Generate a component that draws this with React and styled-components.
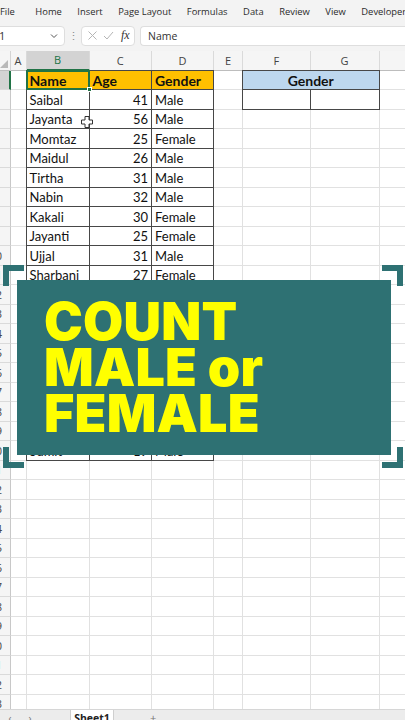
import React from "react";
import styled, { createGlobalStyle } from "styled-components";

const Global = createGlobalStyle`
  html, body { margin: 0; padding: 0; background: #fff; }
  * { box-sizing: border-box; }
`;

const App_ = styled.div`
  position: relative;
  width: 405px;
  height: 720px;
  overflow: hidden;
  display: flex;
  flex-direction: column;
  background: #fff;
  font-family: "Lato", "Liberation Sans", sans-serif;
`;

const MenuBar = styled.div`
  height: 23px;
  flex: none;
  display: flex;
  align-items: center;
  gap: 15.5px;
  padding-left: 0;
  background: #f3f3f3;
  font-family: "Open Sans", "Noto Sans", sans-serif;
  font-size: 9.4px;
  color: #2b2b2b;
  white-space: nowrap;
`;

const MenuItem = styled.span`
  margin-right: ${(p) => (p.$extra ? "5px" : "0")};
`;

const FormulaBar = styled.div`
  height: 28px;
  flex: none;
  display: flex;
  align-items: center;
  background: #f3f3f3;
  padding-bottom: 3px;
  font-family: "Open Sans", "Noto Sans", sans-serif;
  color: #333;
`;

const NameBox = styled.div`
  margin-left: -12px;
  width: 77px;
  height: 20px;
  background: #fff;
  border: 1px solid #dedede;
  border-radius: 4px;
  display: flex;
  align-items: center;
  justify-content: space-between;
  padding: 0 6px 0 3px;
  font-size: 11px;
`;

const Dots = styled.span`
  width: 16px;
  text-align: center;
  color: #8a8a8a;
  font-size: 11px;
`;

const FxBox = styled.div`
  width: 54px;
  height: 20px;
  background: #fff;
  border: 1px solid #dedede;
  border-radius: 4px;
  display: flex;
  align-items: center;
  gap: 5px;
  padding-left: 5px;
`;

const FxText = styled.span`
  font-family: "Liberation Serif", serif;
  font-style: italic;
  font-size: 12px;
  color: #333;
  margin-left: 2px;
`;

const FormulaInput = styled.div`
  flex: 1;
  margin-left: 5px;
  height: 20px;
  background: #fff;
  border: 1px solid #dedede;
  border-right: none;
  border-radius: 4px 0 0 4px;
  display: flex;
  align-items: center;
  padding-left: 7px;
  font-size: 10.5px;
  color: #333;
`;

const Sheet = styled.div`
  flex: 1;
  overflow: hidden;
  background: #fff;
`;

const Grid = styled.div`
  margin-left: -18px;
  display: grid;
  grid-template-columns: 28.5px 16px 63px 62.5px 62px 29px 67.5px 69px 80px;
  grid-template-rows: 19.5px;
  grid-auto-rows: 19.5px;
`;

const Corner = styled.div`
  background: #f5f5f5;
  border-right: 1px solid #d4d4d4;
  border-bottom: 1px solid #bdbdbd;
  display: flex;
  align-items: flex-end;
  justify-content: flex-end;
  padding: 0 2px 2px 0;
`;

const ColHead = styled.div`
  background: ${(p) => (p.$active ? "#d3d3d3" : "#f5f5f5")};
  border-right: 1px solid #dadada;
  border-bottom: ${(p) => (p.$active ? "2px solid #217346" : "1px solid #bdbdbd")};
  display: flex;
  align-items: center;
  justify-content: center;
  font-family: "Open Sans", "Noto Sans", sans-serif;
  font-size: 11px;
  color: ${(p) => (p.$active ? "#217346" : "#444")};
`;

const RowHead = styled.div`
  background: ${(p) => (p.$active ? "#d3d3d3" : "#f5f5f5")};
  border-right: ${(p) => (p.$active ? "2px solid #217346" : "1px solid #c8c8c8")};
  border-bottom: 1px solid #dadada;
  display: flex;
  align-items: center;
  justify-content: center;
  font-family: "Open Sans", "Noto Sans", sans-serif;
  font-size: 11px;
  color: #444;
`;

const Cell = styled.div`
  position: relative;
  border-right: 1px solid #e1e1e1;
  border-bottom: 1px solid #e1e1e1;
  background: ${(p) => p.$bg || "#fff"};
  grid-column: ${(p) => (p.$span ? `span ${p.$span}` : "auto")};
  display: flex;
  align-items: center;
  justify-content: ${(p) =>
    p.$align === "right" ? "flex-end" : p.$align === "center" ? "center" : "flex-start"};
  padding: 1px 3px 0 3px;
  font-size: ${(p) => (p.$bold ? "14px" : "13px")};
  font-weight: ${(p) => (p.$bold ? 700 : 400)};
  color: #111;
  white-space: nowrap;
  overflow: visible;

  ${(p) =>
    p.$dark &&
    `
    &::after {
      content: "";
      position: absolute;
      top: -1px; left: -1px; right: -1px; bottom: -1px;
      border: 1px solid #474747;
      pointer-events: none;
      z-index: 1;
    }
  `}

  ${(p) =>
    p.$selected &&
    `
    &::before {
      content: "";
      position: absolute;
      top: -1px; left: -1px; right: -1px; bottom: -1px;
      border: 2px solid #217346;
      pointer-events: none;
      z-index: 2;
    }
  `}
`;

const FillHandle = styled.span`
  position: absolute;
  right: -3px;
  bottom: -3px;
  width: 5px;
  height: 5px;
  background: #217346;
  border: 1px solid #fff;
  z-index: 3;
`;

const CursorIcon = styled.svg`
  position: absolute;
  right: -4px;
  top: 6px;
  z-index: 3;
`;

const TabBar = styled.div`
  height: 11px;
  flex: none;
  display: flex;
  align-items: flex-start;
  background: #ececec;
  border-top: 1px solid #d6d6d6;
  overflow: hidden;
  font-family: "Open Sans", "Noto Sans", sans-serif;
  font-size: 10px;
  color: #777;
`;

const Arrow = styled.span`
  width: ${(p) => p.$w}px;
  padding-top: 1px;
  text-align: center;
`;

const Tab = styled.div`
  margin-left: 30px;
  width: 44px;
  height: 20px;
  background: #fff;
  border-left: 1px solid #cfcfcf;
  border-right: 1px solid #cfcfcf;
  text-align: center;
  font-weight: 700;
  font-size: 10.5px;
  color: #222;
  padding-top: 1px;
`;

const Plus = styled.span`
  margin-left: 36px;
  padding-top: 0;
  font-size: 11px;
`;

const Overlay = styled.div`
  position: absolute;
  left: 17px;
  top: 280px;
  width: 374px;
  height: 175px;
  background: #2e7173;
  padding: 19px 0 0 27px;
  z-index: 10;
`;

const Title = styled.div`
  font-family: "Inter", "Lato", sans-serif;
  font-weight: 900;
  font-size: 52px;
  line-height: 46px;
  letter-spacing: 0.2px;
  color: #ffff00;
  white-space: nowrap;
`;

const Bracket = styled.div`
  position: absolute;
  width: 21px;
  height: 21px;
  z-index: 11;
  border-color: #2e7173;
  border-style: solid;
  border-width: 0;
  ${(p) => (p.$top ? "top: 265px; border-top-width: 6px;" : "top: 447px; border-bottom-width: 6px;")}
  ${(p) => (p.$left ? "left: 3px; border-left-width: 6px;" : "left: 382px; border-right-width: 6px;")}
`;

const menu = ["File", "Home", "Insert", "Page Layout", "Formulas", "Data", "Review", "View", "Developer"];
const cols = ["", "A", "B", "C", "D", "E", "F", "G", ""];

const table = [
  ["Name", "Age", "Gender"],
  ["Saibal", 41, "Male"],
  ["Jayanta", 56, "Male"],
  ["Momtaz", 25, "Female"],
  ["Maidul", 26, "Male"],
  ["Tirtha", 31, "Male"],
  ["Nabin", 32, "Male"],
  ["Kakali", 30, "Female"],
  ["Jayanti", 25, "Female"],
  ["Ujjal", 31, "Male"],
  ["Sharbani", 27, "Female"],
  ["Rakesh", 28, "Male"],
  ["Priya", 24, "Female"],
  ["Amit", 35, "Male"],
  ["Sunita", 29, "Female"],
  ["Rahul", 33, "Male"],
  ["Puja", 22, "Female"],
  ["Arjun", 27, "Male"],
  ["Rina", 26, "Female"],
  ["Sumit", 19, "Male"],
];

const ORANGE = "#ffc000";
const BLUE = "#bdd7ee";

function Row({ r }) {
  const t = table[r - 1];
  const head = r === 1;
  return (
    <>
      <RowHead $active={head}>{r}</RowHead>
      <Cell />
      {t ? (
        <>
          <Cell $dark $bold={head} $bg={head ? ORANGE : undefined} $selected={head}>
            {t[0]}
            {head && <FillHandle />}
            {r === 3 && (
              <CursorIcon width="12" height="12" viewBox="0 0 12 12">
                <path
                  d="M4 0.5h4v3.5h3.5v4H8v3.5H4V8H0.5V4H4z"
                  fill="#fff"
                  stroke="#333"
                  strokeWidth="1"
                />
              </CursorIcon>
            )}
          </Cell>
          <Cell $dark $bold={head} $bg={head ? ORANGE : undefined} $align={head ? "left" : "right"}>
            {t[1]}
          </Cell>
          <Cell $dark $bold={head} $bg={head ? ORANGE : undefined}>
            {t[2]}
          </Cell>
        </>
      ) : (
        <>
          <Cell />
          <Cell />
          <Cell />
        </>
      )}
      <Cell />
      {r === 1 ? (
        <Cell $dark $bold $bg={BLUE} $span={2} $align="center">
          Gender
        </Cell>
      ) : r === 2 ? (
        <>
          <Cell $dark />
          <Cell $dark />
        </>
      ) : (
        <>
          <Cell />
          <Cell />
        </>
      )}
      <Cell />
    </>
  );
}

export default function App() {
  const rows = Array.from({ length: 33 }, (_, i) => i + 1);
  return (
    <App_>
      <Global />
      <MenuBar>
        {menu.map((m, i) => (
          <MenuItem key={m} $extra={i === 0}>
            {m}
          </MenuItem>
        ))}
      </MenuBar>
      <FormulaBar>
        <NameBox>
          <span>B1</span>
          <svg width="8" height="6" viewBox="0 0 8 6">
            <path d="M1 1.5l3 3 3-3" fill="none" stroke="#555" strokeWidth="1" />
          </svg>
        </NameBox>
        <Dots>⋮</Dots>
        <FxBox>
          <svg width="11" height="11" viewBox="0 0 11 11">
            <path d="M1.5 1.5l8 8M9.5 1.5l-8 8" stroke="#b5b5b5" strokeWidth="1" />
          </svg>
          <svg width="11" height="11" viewBox="0 0 11 11">
            <path d="M1 6l3 3 6-7" fill="none" stroke="#b5b5b5" strokeWidth="1" />
          </svg>
          <FxText>fx</FxText>
        </FxBox>
        <FormulaInput>Name</FormulaInput>
      </FormulaBar>
      <Sheet>
        <Grid>
          <Corner>
            <svg width="8" height="8" viewBox="0 0 8 8">
              <path d="M8 0V8H0z" fill="#b9b9b9" />
            </svg>
          </Corner>
          {cols.slice(1).map((c, i) => (
            <ColHead key={i} $active={c === "B"}>
              {c}
            </ColHead>
          ))}
          {rows.map((r) => (
            <Row key={r} r={r} />
          ))}
        </Grid>
      </Sheet>
      <TabBar>
        <Arrow $w={20}>‹</Arrow>
        <Arrow $w={20}>›</Arrow>
        <Tab>Sheet1</Tab>
        <Plus>+</Plus>
      </TabBar>
      <Overlay>
        <Title>COUNT</Title>
        <Title>MALE or</Title>
        <Title>FEMALE</Title>
      </Overlay>
      <Bracket $top $left />
      <Bracket $top />
      <Bracket $left />
      <Bracket />
    </App_>
  );
}
